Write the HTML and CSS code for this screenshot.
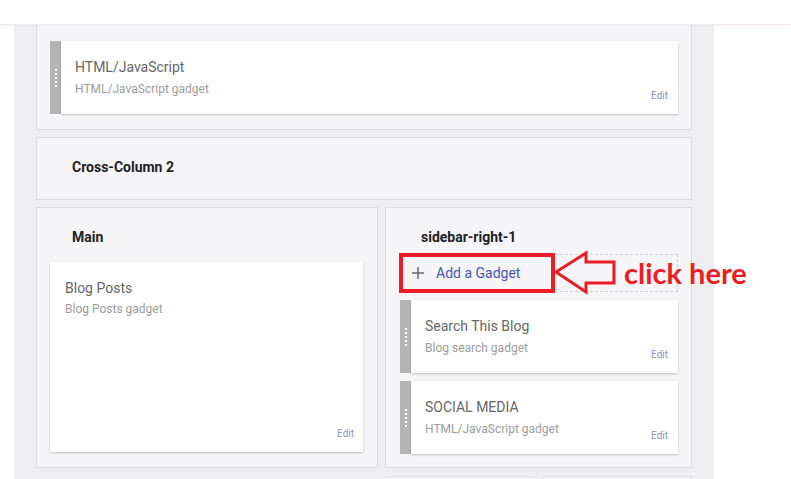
FILE: index.html
```html
<!DOCTYPE html>
<html>
<head>
<meta charset="utf-8">
<link rel="stylesheet" href="styles.css">
</head>
<body>
<div class="topbar"></div>
<div class="canvas">
  <div class="sec sec-top">
    <div class="gadget">
      <div class="handle"><span></span><span></span><span></span><span></span><span></span></div>
      <div class="gbody">
        <div class="gtitle">HTML/JavaScript</div>
        <div class="meta"><span class="gsub">HTML/JavaScript gadget</span><span class="edit">Edit</span></div>
      </div>
    </div>
  </div>
  <div class="sec sec-cross">
    <div class="heading">Cross-Column 2</div>
  </div>
  <div class="cols">
    <div class="sec sec-main">
      <div class="heading">Main</div>
      <div class="bigcard">
        <div class="gtitle">Blog Posts</div>
        <div class="gsub bsub">Blog Posts gadget</div>
        <span class="edit bedit">Edit</span>
      </div>
    </div>
    <div class="sec sec-side">
      <div class="heading">sidebar-right-1</div>
      <div class="addbox">
        <svg class="plus" width="12" height="12" viewBox="0 0 12 12"><path d="M6 0V12M0 6H12" stroke="#666" stroke-width="1.5" fill="none"/></svg>
        <span class="addtext">Add a Gadget</span>
        <div class="redbox"></div>
        <svg class="arrow" width="64" height="46" viewBox="0 0 64 46"><path d="M2 22 L32 3 L32 12 L60 12 L60 33 L32 33 L32 42 Z" fill="none" stroke="#ed1c24" stroke-width="3" stroke-linejoin="miter"/></svg>
        <span class="clickhere">click here</span>
      </div>
      <div class="gadget">
        <div class="handle"><span></span><span></span><span></span><span></span><span></span></div>
        <div class="gbody">
          <div class="gtitle">Search This Blog</div>
          <div class="meta"><span class="gsub">Blog search gadget</span><span class="edit">Edit</span></div>
        </div>
      </div>
      <div class="gadget">
        <div class="handle"><span></span><span></span><span></span><span></span><span></span></div>
        <div class="gbody">
          <div class="gtitle">SOCIAL MEDIA</div>
          <div class="meta"><span class="gsub">HTML/JavaScript gadget</span><span class="edit">Edit</span></div>
        </div>
      </div>
    </div>
  </div>
  <div class="cols bottom">
    <div></div>
    <div class="pair">
      <div class="sec small"></div>
      <div class="sec small"></div>
    </div>
  </div>
</div>
</body>
</html>
```
FILE: styles.css
```css
html, body {
  margin: 0;
  padding: 0;
  background: #ffffff;
  height: 479px;
  overflow: hidden;
  font-family: Roboto, "Noto Sans", sans-serif;
}
.topbar {
  position: relative;
  z-index: 2;
  height: 24px;
  background: #ffffff;
  border-bottom: 1px solid #f1e9eb;
  box-shadow: 0 1px 2px rgba(0, 0, 0, 0.05);
  margin-bottom: -1px;
}
.canvas {
  margin-left: 14px;
  width: 656px;
  padding: 0 22px;
  background: #efeff1;
  height: 455px;
}
.sec {
  background: #f5f5f7;
  border: 1px solid #dcdcde;
  box-sizing: border-box;
}
.sec-top {
  border-top: none;
  padding: 17px 13px 15px 13px;
}
.sec-cross {
  margin-top: 7px;
  height: 63px;
  padding-top: 21px;
}
.heading {
  font-weight: bold;
  font-size: 14px;
  line-height: 16px;
  color: #202124;
  padding-left: 35px;
}
.sec-main .heading, .sec-side .heading {
  padding-top: 21px;
  padding-left: 22px;
}
.sec-side .heading {
  padding-left: 21px;
}
.cols {
  margin-top: 7px;
  display: grid;
  grid-template-columns: 342px 307px;
  column-gap: 7px;
}
.sec-main {
  padding: 0 14px 13px 13px;
}
.sec-side {
  padding: 0 13px 13px 14px;
}
.gadget {
  display: flex;
  height: 73px;
  margin-top: 8px;
}
.sec-top .gadget {
  margin-top: 0;
}
.handle {
  width: 11px;
  background: #b4b4b4;
  display: flex;
  flex-direction: column;
  align-items: center;
  justify-content: center;
  gap: 2px;
}
.handle span {
  width: 2px;
  height: 2px;
  background: #ffffff;
  display: block;
}
.gbody {
  flex: 1;
  background: #ffffff;
  box-shadow: 0 1px 2px rgba(0, 0, 0, 0.22);
  padding: 18px 10px 18px 14px;
}
.gtitle {
  font-size: 14px;
  line-height: 16px;
  color: #666666;
}
.meta {
  display: flex;
  justify-content: space-between;
  align-items: flex-end;
  margin-top: 7px;
}
.gsub {
  font-size: 12px;
  line-height: 14px;
  color: #9c9c9c;
}
.edit {
  font-size: 10px;
  line-height: 12px;
  color: #8b90c4;
  margin-bottom: -6px;
}
.bigcard {
  margin-top: 17px;
  height: 190px;
  box-sizing: border-box;
  background: #ffffff;
  box-shadow: 0 1px 2px rgba(0, 0, 0, 0.22);
  padding: 18px 9px 12px 15px;
  display: flex;
  flex-direction: column;
}
.bsub {
  margin-top: 6px;
}
.bedit {
  margin-top: auto;
  margin-bottom: 0;
  align-self: flex-end;
}
.addbox {
  position: relative;
  margin-top: 9px;
  height: 38px;
  box-sizing: border-box;
  border: 1px dashed #cfcfd3;
  display: flex;
  align-items: center;
  padding-left: 11px;
}
.plus {
  display: block;
}
.addtext {
  margin-left: 12px;
  font-size: 14px;
  color: #4455b9;
}
.redbox {
  position: absolute;
  left: -2px;
  top: -2px;
  width: 156px;
  height: 40px;
  box-sizing: border-box;
  border: 4px solid #ed1c24;
}
.arrow {
  position: absolute;
  left: 153px;
  top: -5px;
}
.clickhere {
  position: absolute;
  left: 223px;
  top: 1px;
  font-family: Lato, "Open Sans", sans-serif;
  font-weight: bold;
  font-size: 29px;
  line-height: 34px;
  color: #ed1c24;
  white-space: nowrap;
}
.bottom {
  margin-top: 8px;
}
.pair {
  display: flex;
  gap: 7px;
}
.small {
  width: 150px;
  height: 2px;
  border-bottom: none;
}
```
